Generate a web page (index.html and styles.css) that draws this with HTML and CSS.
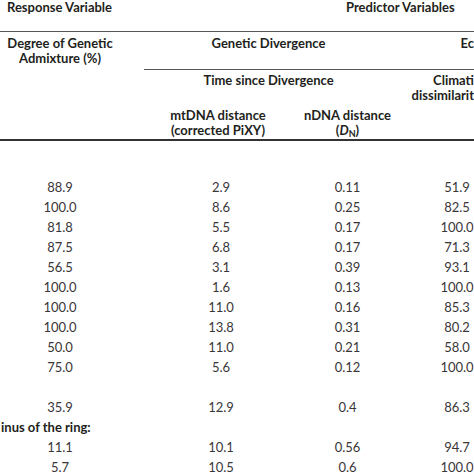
FILE: index.html
```html
<!DOCTYPE html>
<html>
<head>
<meta charset="utf-8">
<link rel="stylesheet" href="styles.css">
</head>
<body>
<div class="tbl">
  <div class="h r1 c-resp">Response Variable</div>
  <div class="h r1 c-pred">Predictor Variables</div>
  <div class="rule full l1"></div>

  <div class="h c-degree">Degree of Genetic<br>Admixture (%)</div>
  <div class="h c-gendiv">Genetic Divergence</div>
  <div class="h c-eco">Ec</div>
  <div class="rule l2"></div>

  <div class="h c-time">Time since Divergence</div>
  <div class="h c-clim"><span>Climati</span><span>dissimilarit</span></div>
  <div class="h c-mt">mtDNA distance<br>(corrected PiXY)</div>
  <div class="h c-nd">nDNA distance<br>(<i>D</i><sub>N</sub>)</div>
  <div class="rule thick full l3"></div>
</div>

<div class="data">
  <div class="row spacer"></div>
  <div class="row"><span>88.9</span><span>2.9</span><span>0.11</span><span>51.9</span></div>
  <div class="row"><span>100.0</span><span>8.6</span><span>0.25</span><span>82.5</span></div>
  <div class="row"><span>81.8</span><span>5.5</span><span>0.17</span><span>100.0</span></div>
  <div class="row"><span>87.5</span><span>6.8</span><span>0.17</span><span>71.3</span></div>
  <div class="row"><span>56.5</span><span>3.1</span><span>0.39</span><span>93.1</span></div>
  <div class="row"><span>100.0</span><span>1.6</span><span>0.13</span><span>100.0</span></div>
  <div class="row"><span>100.0</span><span>11.0</span><span>0.16</span><span>85.3</span></div>
  <div class="row"><span>100.0</span><span>13.8</span><span>0.31</span><span>80.2</span></div>
  <div class="row"><span>50.0</span><span>11.0</span><span>0.21</span><span>58.0</span></div>
  <div class="row"><span>75.0</span><span>5.6</span><span>0.12</span><span>100.0</span></div>
  <div class="row"></div>
  <div class="row"><span>35.9</span><span>12.9</span><span>0.4</span><span>86.3</span></div>
  <div class="row label"><span>inus of the ring:</span></div>
  <div class="row"><span>11.1</span><span>10.1</span><span>0.56</span><span>94.7</span></div>
  <div class="row"><span>5.7</span><span>10.5</span><span>0.6</span><span>100.0</span></div>
</div>
</body>
</html>
```
FILE: styles.css
```css
html, body {
  margin: 0;
  padding: 0;
  background: #fff;
  overflow: hidden;
  width: 474px;
  height: 474px;
}
body {
  font-family: "Lato", "Liberation Sans", sans-serif;
  color: #231f20;
}
.tbl {
  display: grid;
  width: 474px;
  grid-template-columns: 120px 24px 148px 111px 71px;
  grid-template-rows: 31px 1px 37px 1px 31px 38px 2px;
}
.h {
  font-weight: bold;
  font-size: 13px;
  line-height: 15px;
  text-align: center;
  white-space: nowrap;
}
.c-resp { grid-column: 1 / 3; grid-row: 1; text-align: left; padding-left: 7px; }
.c-pred { grid-column: 3 / 6; grid-row: 1; text-align: left; padding-left: 202px; }
.rule { background: #555; }
.full { grid-column: 1 / 6; }
.l1 { grid-row: 2; }
.l2 { grid-column: 3 / 6; grid-row: 4; }
.l3 { grid-row: 7; }
.thick { background: #333; }
.c-degree { grid-column: 1; grid-row: 3 / 6; padding-top: 4px; }
.c-gendiv { grid-column: 3 / 5; grid-row: 3; padding-top: 4px; padding-right: 10px; }
.c-eco { grid-column: 5; grid-row: 3; text-align: right; padding-top: 4px; }
.c-time { grid-column: 3 / 5; grid-row: 5; padding-top: 3px; padding-right: 10px; }
.c-clim {
  grid-column: 5; grid-row: 5 / 7; padding-top: 3px;
  display: flex; flex-direction: column; align-items: flex-end;
}
.c-mt { grid-column: 3; grid-row: 6; padding-top: 7px; }
.c-nd { grid-column: 4; grid-row: 6; padding-top: 7px; }
sub { font-size: 9px; vertical-align: -2px; line-height: 0; }

.data {
  width: 474px;
}
.row {
  display: grid;
  grid-template-columns: 120px 24px 148px 111px 71px;
  height: 20px;
  line-height: 20px;
  font-size: 13px;
  color: #3a3637;
}
.row span { text-align: center; }
.row span:nth-child(1) { grid-column: 1; }
.row span:nth-child(2) { grid-column: 3; padding-left: 6px; }
.row span:nth-child(3) { grid-column: 4; }
.row span:nth-child(4) { grid-column: 5; padding-left: 37px; }
.spacer { height: 36px; }
.label span {
  grid-column: 1 / 4;
  text-align: left;
  font-weight: bold;
  color: #231f20;
  padding-left: 1px;
}
```
